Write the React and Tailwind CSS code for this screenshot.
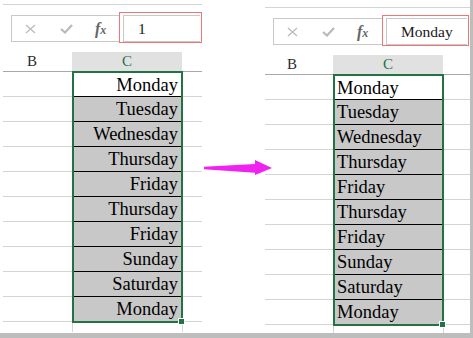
import React from "react";

const days = [
  "Monday",
  "Tuesday",
  "Wednesday",
  "Thursday",
  "Friday",
  "Thursday",
  "Friday",
  "Sunday",
  "Saturday",
  "Monday",
];

const serif = { fontFamily: '"Liberation Serif", "Times New Roman", serif' };

const CrossIcon = () => (
  <svg width="11" height="10" viewBox="0 0 11 10">
    <path d="M1 1 L10 9 M10 1 L1 9" stroke="#bdbdbd" strokeWidth="1.4" fill="none" />
  </svg>
);

const CheckIcon = () => (
  <svg width="13" height="10" viewBox="0 0 13 10">
    <path d="M1 5 L5 8.5 L12 1" stroke="#b9b9b9" strokeWidth="2.2" fill="none" />
  </svg>
);

const FormulaBar = ({ value, redWidth }) => (
  <div className="flex items-start pt-[7px]">
    <div className="ml-[8px] mt-[3px] flex h-[27px] w-[110px] items-center border border-[#c9c9c9] pl-[13px]">
      <CrossIcon />
      <span className="ml-[24px]">
        <CheckIcon />
      </span>
      <span
        className="ml-[22px] text-[16px] font-semibold italic leading-none text-[#666666]"
        style={serif}
      >
        f<span className="text-[12px]">x</span>
      </span>
    </div>
    <div
      className="-ml-px flex h-[31px] border border-[#f27474] pl-[3px] pr-px pt-[2px]"
      style={{ width: redWidth }}
    >
      <div
        className="flex h-[27px] flex-1 items-center border-b border-l border-t border-[#c9c9c9] pl-[14px] text-[15.5px] text-[#1a1a1a]"
        style={serif}
      >
        {value}
      </div>
    </div>
  </div>
);

const Panel = ({ value, redWidth, bWidth, bPad, dWidth, align }) => (
  <div className="border-t border-[#d4d4d4]" style={{ width: bWidth + 111 + dWidth }}>
    <FormulaBar value={value} redWidth={redWidth} />

    <div className="mt-[9px] flex h-[19px] text-[15px] leading-[19px]" style={serif}>
      <div className="text-[#2b2b2b]" style={{ width: bWidth, paddingLeft: bPad }}>
        B
      </div>
      <div className="w-[110px] bg-[#e1e1e1] text-center text-[#217346]">C</div>
    </div>

    <div className="flex">
      <div className="border-t border-[#a8a8a8]" style={{ width: bWidth }}>
        {days.map((_, i) => (
          <div key={i} className="h-[25px] border-b border-[#d4d4d4]" />
        ))}
      </div>

      <div className="relative h-[252px] w-[111px] border-2 border-[#217346]">
        {days.map((d, i) => (
          <div
            key={i}
            className={`flex items-center text-[18.5px] leading-[24px] text-black ${
              i === 0 ? "bg-white" : "bg-[#c8c8c8]"
            } ${i === 9 ? "h-[24px]" : "border-b border-black"} ${
              i === 0 ? "h-[24px]" : i === 9 ? "" : "h-[25px]"
            } ${align === "right" ? "justify-end pr-[3px]" : "justify-start pl-[2px]"}`}
            style={serif}
          >
            {d}
          </div>
        ))}
        <div className="absolute -bottom-[4px] -right-[4px] h-[7px] w-[7px] border border-white bg-[#217346]" />
      </div>

      <div className="border-t border-[#a8a8a8]" style={{ width: dWidth }}>
        {days.map((_, i) => (
          <div key={i} className="h-[25px] border-b border-[#d4d4d4]" />
        ))}
      </div>
    </div>

    <div className="flex h-[9px]">
      <div style={{ width: bWidth }} />
      <div className="w-[111px] border-l border-r border-[#d4d4d4]" />
    </div>
  </div>
);

export default function App() {
  return (
    <div className="h-[338px] w-[473px] bg-[#bdbdbd]">
      <div className="relative flex h-[333px] w-[470px] items-start overflow-hidden bg-white">
        <div className="ml-[3px] mt-[4px]">
          <Panel value="1" redWidth={84} bWidth={69} bPad={24} dWidth={19} align="right" />
        </div>
        <div className="ml-[63px] mt-[7px]">
          <Panel value="Monday" redWidth={87} bWidth={68} bPad={22} dWidth={26} align="left" />
        </div>

        <svg
          className="absolute left-[204px] top-[159px]"
          width="70"
          height="18"
          viewBox="0 0 70 18"
        >
          <polygon
            points="0,7.7 51,5 51,1 68,9 51,16 51,13.7 0,10.3"
            fill="#ef22ef"
          />
        </svg>
      </div>
    </div>
  );
}
